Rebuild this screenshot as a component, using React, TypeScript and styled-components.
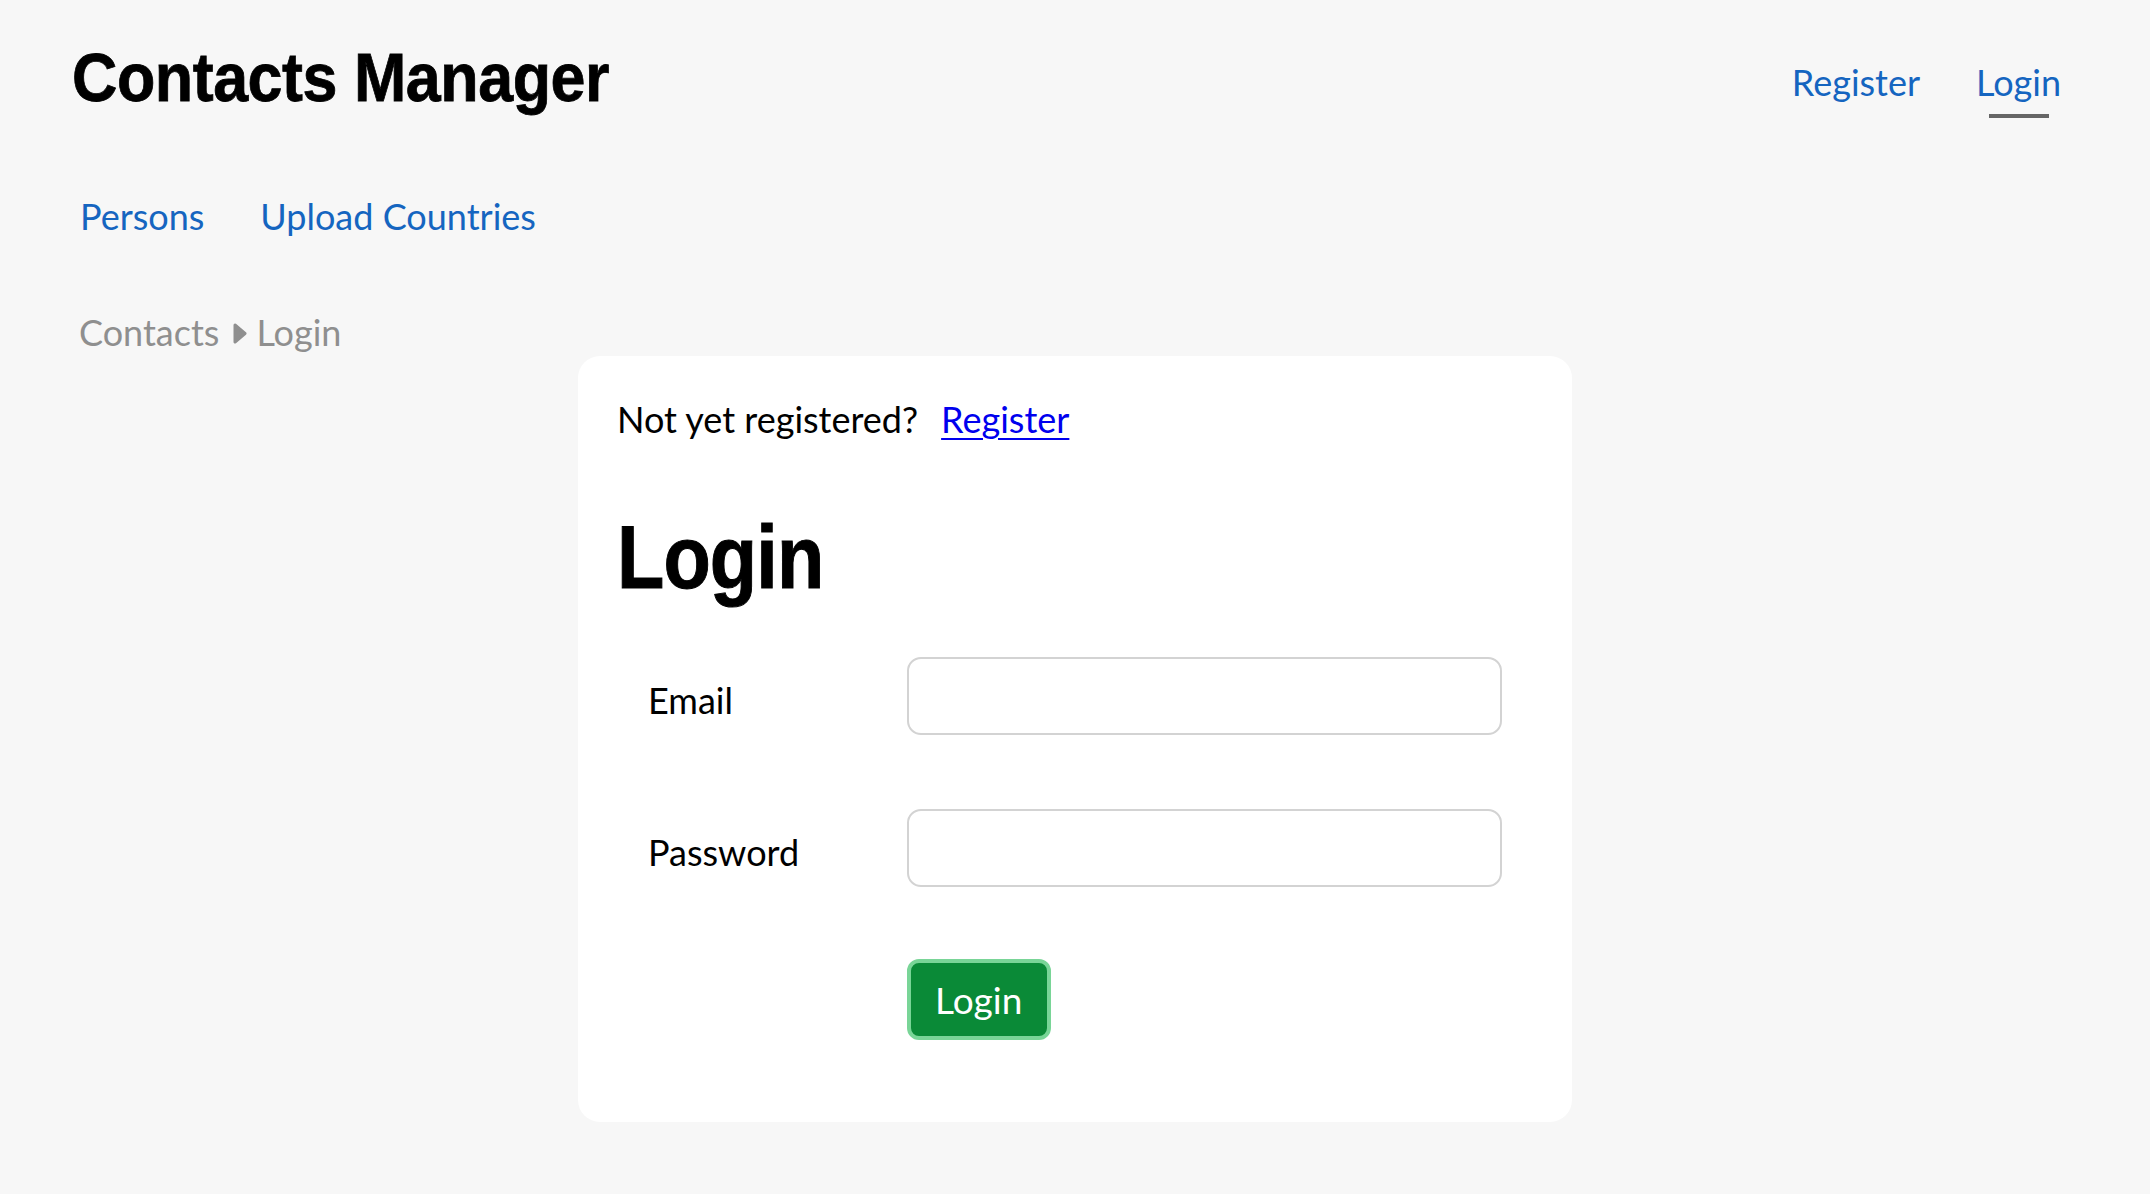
import React from "react";
import styled, { createGlobalStyle } from "styled-components";

const Global = createGlobalStyle`
  html, body { margin: 0; padding: 0; }
  body {
    background: #f7f7f7;
    font-family: Lato, "Open Sans", "Noto Sans", sans-serif;
    color: #000;
  }
  * { box-sizing: border-box; }
`;

const Page = styled.div`
  min-height: 1194px;
`;

const Header = styled.header`
  display: flex;
  justify-content: space-between;
  align-items: flex-start;
  padding: 43px 89px 0 72px;
`;

const Title = styled.h1`
  margin: 0;
  font-family: "Liberation Sans", Arial, sans-serif;
  font-weight: 700;
  font-size: 69px;
  line-height: 70px;
  letter-spacing: -0.5px;
  color: #000;
  -webkit-text-stroke: 0.8px #000;
  transform: scaleX(0.91);
  transform-origin: left center;
  white-space: nowrap;
`;

const TopNav = styled.nav`
  display: flex;
  gap: 56px;
  margin-top: 15px;
`;

const NavLink = styled.a<{ $active?: boolean }>`
  position: relative;
  font-size: 36px;
  line-height: 48px;
  color: #1565c0;
  text-decoration: none;
  &::after {
    content: "";
    display: ${(p) => (p.$active ? "block" : "none")};
    position: absolute;
    left: 50%;
    top: 56px;
    width: 60px;
    height: 4px;
    margin-left: -30px;
    background: #666;
  }
`;

const MainNav = styled.nav`
  display: flex;
  gap: 56px;
  padding-left: 80px;
  margin-top: 79px;
`;

const Crumbs = styled.div`
  display: flex;
  align-items: center;
  padding-left: 79px;
  margin-top: 68px;
  font-size: 36px;
  line-height: 48px;
  color: #8f8f8f;
`;

const CrumbSep = styled.svg`
  width: 14px;
  height: 21px;
  margin: 2px 9px 0 14px;
`;

const Card = styled.main`
  width: 994px;
  margin: 0 auto;
  background: #fff;
  border-radius: 22px;
  padding: 39px 70px 82px 39px;
`;

const Prompt = styled.p`
  margin: 0;
  font-size: 36px;
  line-height: 48px;
  color: #000;
`;

const InlineLink = styled.a`
  margin-left: 23px;
  color: #0000ee;
  text-decoration: underline;
  text-underline-offset: 5px;
  text-decoration-thickness: 2px;
`;

const Heading = styled.h2`
  margin: 70px 0 0;
  font-family: "Liberation Sans", Arial, sans-serif;
  font-weight: 700;
  font-size: 89px;
  line-height: 88px;
  letter-spacing: -1px;
  color: #000;
  -webkit-text-stroke: 1px #000;
  transform: scaleX(0.87);
  transform-origin: left center;
`;

const Form = styled.form`
  display: grid;
  grid-template-columns: 290px 1fr;
  align-items: center;
  row-gap: 74px;
  margin-top: 56px;
`;

const Label = styled.label`
  margin-top: 8px;
  padding-left: 31px;
  font-size: 36px;
  line-height: 48px;
  color: #000;
`;

const Input = styled.input`
  display: block;
  width: 595px;
  height: 78px;
  border: 2px solid #d3d3d3;
  border-radius: 14px;
  background: #fff;
  outline: none;
  font-size: 30px;
  padding: 0 16px;
`;

const Button = styled.button`
  grid-column: 2;
  justify-self: start;
  margin-top: -2px;
  height: 81px;
  padding: 0 25px 0 24px;
  background: #0a8a37;
  border: 4px solid #79d597;
  border-radius: 12px;
  color: #fff;
  font-family: Lato, "Open Sans", sans-serif;
  font-size: 37px;
  line-height: 1;
  cursor: pointer;
`;

export default function App() {
  return (
    <Page>
      <Global />
      <Header>
        <Title>Contacts Manager</Title>
        <TopNav>
          <NavLink href="#">Register</NavLink>
          <NavLink href="#" $active>
            Login
          </NavLink>
        </TopNav>
      </Header>
      <MainNav>
        <NavLink href="#">Persons</NavLink>
        <NavLink href="#">Upload Countries</NavLink>
      </MainNav>
      <Crumbs>
        <span>Contacts</span>
        <CrumbSep viewBox="0 0 14 21">
          <path
            d="M2 2 L12 10.5 L2 19 Z"
            fill="#8f8f8f"
            stroke="#8f8f8f"
            strokeWidth="3"
            strokeLinejoin="round"
          />
        </CrumbSep>
        <span>Login</span>
      </Crumbs>
      <Card>
        <Prompt>
          Not yet registered?
          <InlineLink href="#">Register</InlineLink>
        </Prompt>
        <Heading>Login</Heading>
        <Form onSubmit={(e) => e.preventDefault()}>
          <Label htmlFor="email">Email</Label>
          <Input id="email" type="email" />
          <Label htmlFor="password">Password</Label>
          <Input id="password" type="password" />
          <Button type="submit">Login</Button>
        </Form>
      </Card>
    </Page>
  );
}
